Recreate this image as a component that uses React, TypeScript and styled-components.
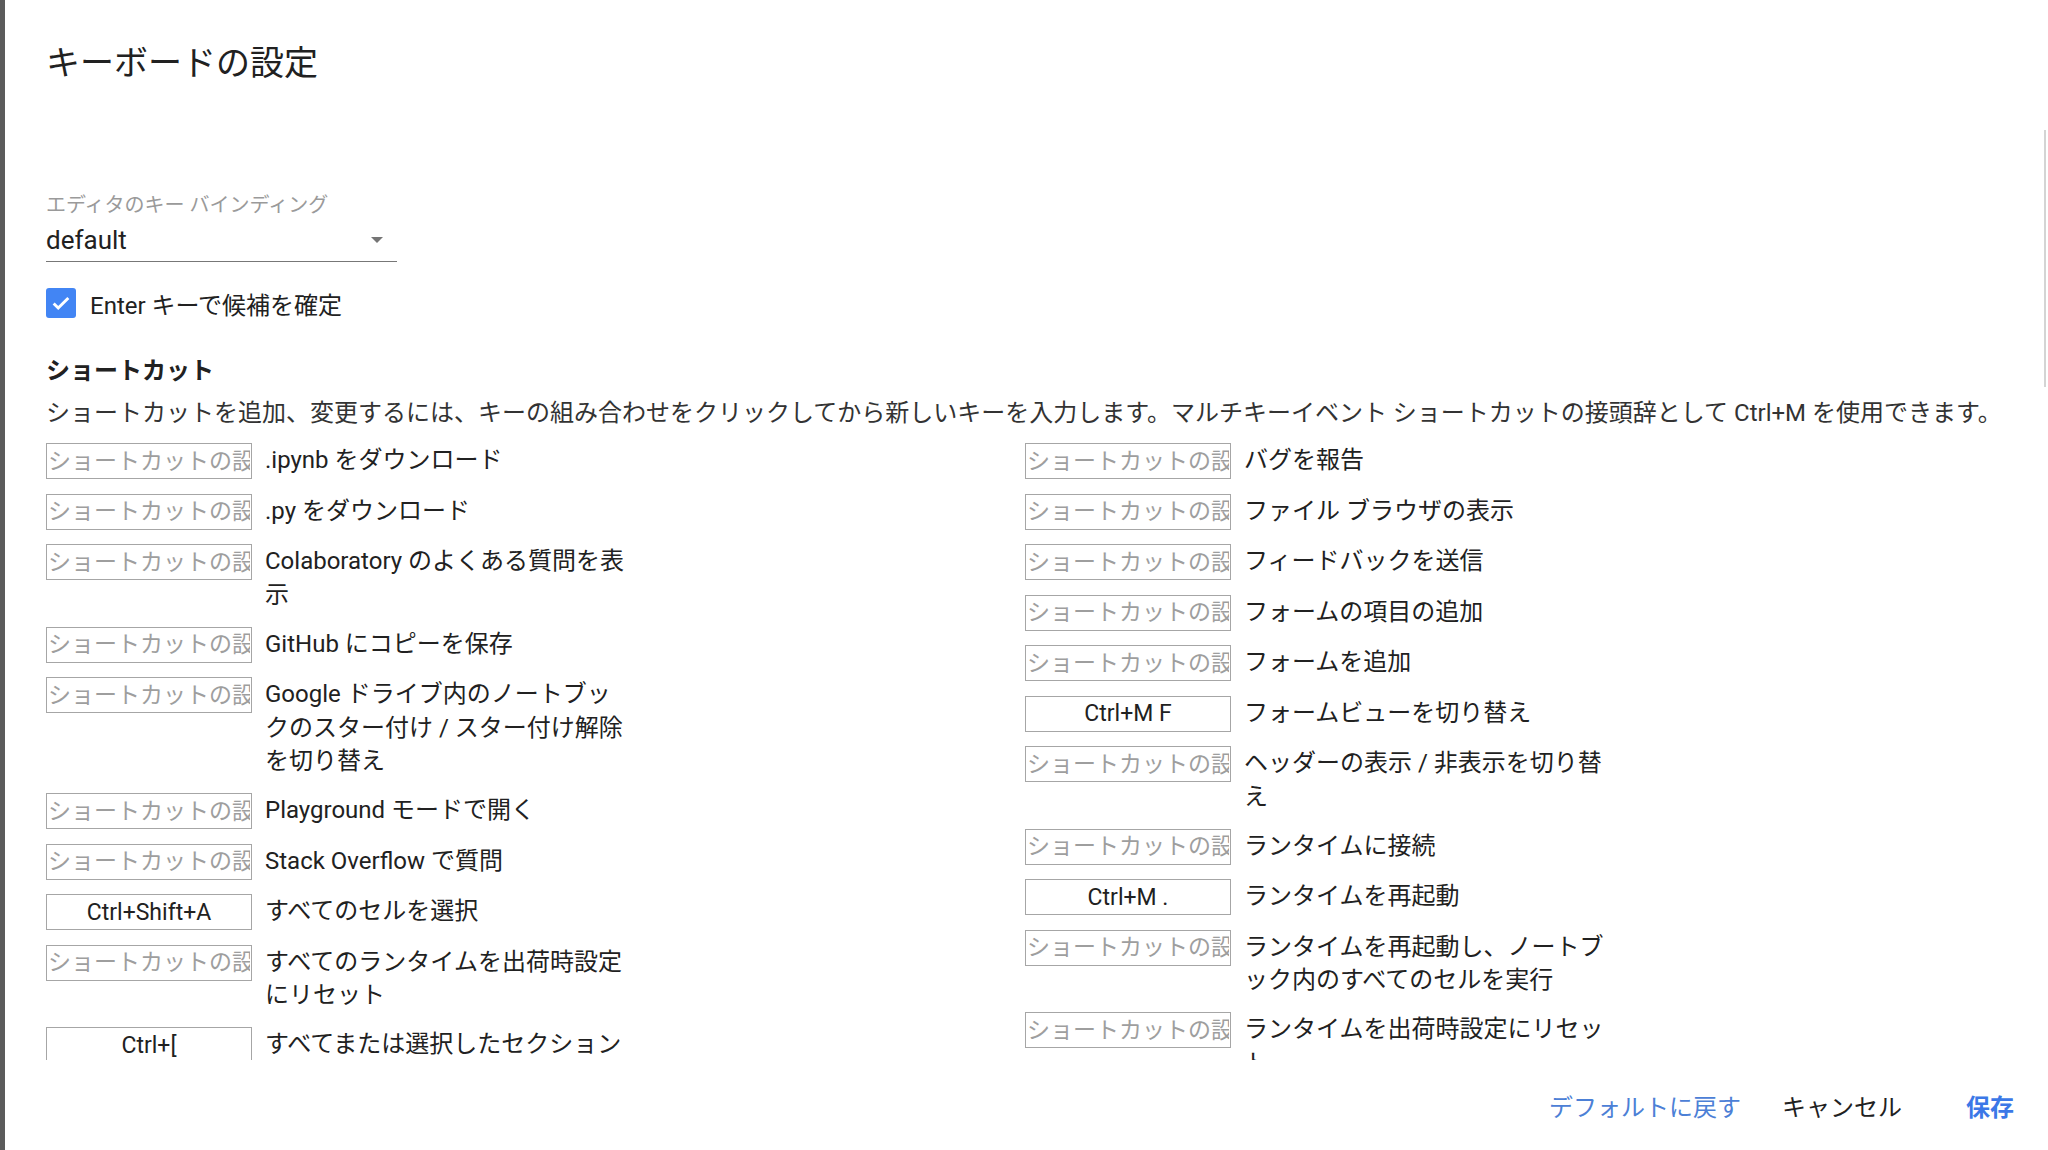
import React from 'react';
import styled, { createGlobalStyle } from 'styled-components';

const GlobalStyle = createGlobalStyle`
  html, body {
    margin: 0;
    padding: 0;
    background: #fff;
  }
  body {
    font-family: Roboto, "Noto Sans CJK JP", sans-serif;
    color: #212121;
  }
`

const Dialog = styled.div`
  position: relative;
  width: 2048px;
  height: 1150px;
  box-sizing: border-box;
  border-left: 5px solid #5b5b5b;
  background: #fff;
  display: flex;
  flex-direction: column;
  overflow: hidden;
`

const ScrollThumb = styled.div`
  position: absolute;
  top: 130px;
  right: 2px;
  width: 2px;
  height: 257px;
  background: #d4d4d4;
`

const Body = styled.div`
  flex: 1;
  min-height: 0;
  overflow: hidden;
  padding: 43px 30px 0 41px;
`

const Title = styled.h1`
  margin: 0;
  font-size: 34px;
  font-weight: 400;
  line-height: 40px;
  color: #212121;
`

const FieldLabel = styled.div`
  margin-top: 110px;
  font-size: 20px;
  line-height: 24px;
  color: #9a9a9a;
`

const SelectBox = styled.div`
  margin-top: 7px;
  width: 351px;
  height: 38px;
  box-sizing: border-box;
  padding: 0 14px 5px 0;
  border-bottom: 1px solid #777;
  display: flex;
  align-items: center;
  justify-content: space-between;
  font-size: 26px;
  line-height: 32px;
  color: #212121;
`

const Arrow = styled.span`
  width: 0;
  height: 0;
  border-left: 6px solid transparent;
  border-right: 6px solid transparent;
  border-top: 6px solid #757575;
`

const CheckRow = styled.label`
  margin-top: 26px;
  display: flex;
  align-items: center;
  gap: 14px;
  height: 30px;
  font-size: 24px;
  color: #212121;
`

const CheckBox = styled.span`
  width: 30px;
  height: 30px;
  border-radius: 3px;
  background: #4285f4;
  display: flex;
  align-items: center;
  justify-content: center;
`

const Heading = styled.h2`
  margin: 37px 0 0;
  font-size: 24px;
  font-weight: 700;
  line-height: 32px;
  color: #212121;
`

const Description = styled.p`
  margin: 10px 0 0;
  font-size: 24px;
  line-height: 32px;
  white-space: nowrap;
  color: #333;
`

const Columns = styled.div`
  margin-top: 14px;
  display: grid;
  grid-template-columns: 979px 1fr;
  align-items: start;
`

const Column = styled.div`
  display: flex;
  flex-direction: column;
`

const Row = styled.div`
  display: flex;
  align-items: flex-start;
  gap: 13px;
  margin-bottom: 14.5px;
`

const KeyInput = styled.input`
  flex: none;
  width: 206px;
  height: 36px;
  box-sizing: border-box;
  margin: 0;
  padding: 0 1px;
  border: 1px solid #a6a6a6;
  border-radius: 0;
  background: #fff;
  font-family: Roboto, "Noto Sans CJK JP", sans-serif;
  font-size: 23px;
  text-align: center;
  color: #212121;
  outline: none;
  &::placeholder {
    color: #9e9e9e;
  }
`

const ActionLabel = styled.div`
  flex: 0 1 364px;
  padding-top: 1px;
  font-size: 24px;
  line-height: 33.5px;
  color: #212121;
`

const Footer = styled.div`
  flex: none;
  height: 90px;
  display: flex;
  justify-content: flex-end;
  align-items: center;
  gap: 17px;
  padding-right: 10px;
`

const Button = styled.button<{ variant?: 'link' | 'plain' | 'primary' }>`
  min-width: 96px;
  height: 54px;
  padding: 0 12px;
  border: 0;
  background: none;
  font-family: Roboto, "Noto Sans CJK JP", sans-serif;
  font-size: 24px;
  cursor: pointer;
  font-weight: ${p => p.variant === 'primary' ? 700 : 400};
  margin-left: ${p => p.variant === 'primary' ? '11px' : '0'};
  color: ${p => p.variant === 'plain' ? '#212121' : p.variant === 'primary' ? '#3b78e7' : '#4c80d6'};
`

type Shortcut = {
  keys?: string,
  label: string,
}

const leftShortcuts: Shortcut[] = [
  { label: '.ipynb をダウンロード' },
  { label: '.py をダウンロード' },
  { label: 'Colaboratory のよくある質問を表示' },
  { label: 'GitHub にコピーを保存' },
  { label: 'Google ドライブ内のノートブックのスター付け / スター付け解除を切り替え' },
  { label: 'Playground モードで開く' },
  { label: 'Stack Overflow で質問' },
  { keys: 'Ctrl+Shift+A', label: 'すべてのセルを選択' },
  { label: 'すべてのランタイムを出荷時設定にリセット' },
  { keys: 'Ctrl+[', label: 'すべてまたは選択したセクションを折りたたむ' },
]

const rightShortcuts: Shortcut[] = [
  { label: 'バグを報告' },
  { label: 'ファイル ブラウザの表示' },
  { label: 'フィードバックを送信' },
  { label: 'フォームの項目の追加' },
  { label: 'フォームを追加' },
  { keys: 'Ctrl+M F', label: 'フォームビューを切り替え' },
  { label: 'ヘッダーの表示 / 非表示を切り替え' },
  { label: 'ランタイムに接続' },
  { keys: 'Ctrl+M .', label: 'ランタイムを再起動' },
  { label: 'ランタイムを再起動し、ノートブック内のすべてのセルを実行' },
  { label: 'ランタイムを出荷時設定にリセット' },
]

function ShortcutList({ items }: { items: Shortcut[] }) {
  return (
    <Column>
      {items.map(s => (
        <Row key={s.label}>
          <KeyInput placeholder="ショートカットの設定" defaultValue={s.keys || ''} />
          <ActionLabel>{s.label}</ActionLabel>
        </Row>
      ))}
    </Column>
  )
}

export default function App() {
  return (
    <>
      <GlobalStyle />
      <Dialog>
        <Body>
          <Title>キーボードの設定</Title>
          <FieldLabel>エディタのキー バインディング</FieldLabel>
          <SelectBox>
            <span>default</span>
            <Arrow />
          </SelectBox>
          <CheckRow>
            <CheckBox>
              <svg width="22" height="22" viewBox="0 0 24 24">
                <path d="M4 12.5l5 5L20 6.5" fill="none" stroke="#fff" strokeWidth="3.2" />
              </svg>
            </CheckBox>
            Enter キーで候補を確定
          </CheckRow>
          <Heading>ショートカット</Heading>
          <Description>
            ショートカットを追加、変更するには、キーの組み合わせをクリックしてから新しいキーを入力します。マルチキーイベント ショートカットの接頭辞として Ctrl+M を使用できます。
          </Description>
          <Columns>
            <ShortcutList items={leftShortcuts} />
            <ShortcutList items={rightShortcuts} />
          </Columns>
        </Body>
        <Footer>
          <Button variant="link">デフォルトに戻す</Button>
          <Button variant="plain">キャンセル</Button>
          <Button variant="primary">保存</Button>
        </Footer>
        <ScrollThumb />
      </Dialog>
    </>
  )
}
